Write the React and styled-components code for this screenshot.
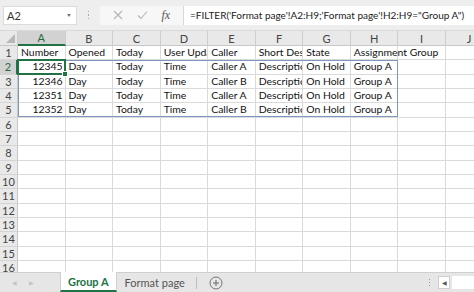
import React from "react";
import styled, { createGlobalStyle } from "styled-components";

const Global = createGlobalStyle`
  body {
    margin: 0;
    font-family: Lato, "Open Sans", sans-serif;
  }
`;

const COL_W = 47.55;
const ROW_H = 14.33;
const cols = ["A", "B", "C", "D", "E", "F", "G", "H", "I", "J"];

const data = [
  ["Number", "Opened", "Today", "User Update", "Caller", "Short Description", "State", "Assignment Group"],
  [12345, "Day", "Today", "Time", "Caller A", "Description", "On Hold", "Group A"],
  [12346, "Day", "Today", "Time", "Caller B", "Description", "On Hold", "Group A"],
  [12351, "Day", "Today", "Time", "Caller A", "Description", "On Hold", "Group A"],
  [12352, "Day", "Today", "Time", "Caller B", "Description", "On Hold", "Group A"],
];

const Sheet = styled.div`
  width: 474px;
  height: 292px;
  display: flex;
  flex-direction: column;
  background: #fff;
  overflow: hidden;
  position: relative;
`;

const FormulaBar = styled.div`
  height: 31px;
  flex: none;
  background: #eeeeee;
  display: flex;
  align-items: center;
  padding: 0 0 0 3px;
  box-sizing: border-box;
  border-bottom: 1px solid #d9d9d9;
`;

const NameBox = styled.div`
  width: 74px;
  height: 19px;
  background: #fff;
  border: 1px solid #dcdcdc;
  box-sizing: border-box;
  display: flex;
  align-items: center;
  justify-content: space-between;
  padding: 0 5px 0 3px;
  font-size: 11px;
  color: #333;
`;

const Caret = styled.span`
  width: 0;
  height: 0;
  border-left: 2.5px solid transparent;
  border-right: 2.5px solid transparent;
  border-top: 3px solid #777;
`;

const Grip = styled.div`
  width: 23px;
  display: flex;
  flex-direction: column;
  align-items: center;
  gap: 2px;
  span {
    width: 1.5px;
    height: 1.5px;
    background: #aaa;
  }
`;

const IconBox = styled.div`
  width: 83px;
  height: 19px;
  background: #f7f7f7;
  display: flex;
  align-items: center;
  justify-content: space-around;
  padding: 0 6px;
  box-sizing: border-box;
`;

const Fx = styled.span`
  font-family: "Liberation Serif", serif;
  font-style: italic;
  color: #555;
  font-size: 12px;
`;

const FormulaInput = styled.div`
  flex: 1;
  height: 19px;
  background: #fff;
  border-left: 1px solid #d9d9d9;
  display: flex;
  align-items: center;
  padding-left: 6px;
  font-size: 10px;
  color: #222;
  white-space: nowrap;
  overflow: hidden;
`;

const Grid = styled.div`
  flex: 1;
  display: flex;
  flex-direction: column;
  overflow: hidden;
  position: relative;
`;

const Row = styled.div`
  display: grid;
  grid-template-columns: 18px repeat(10, ${COL_W}px);
  height: ${(p) => p.$h}px;
  flex: none;
`;

const HeadCell = styled.div`
  background: ${(p) => (p.$sel ? "#d2d2d2" : "#e9e9e9")};
  color: ${(p) => (p.$sel ? "#1e6b3d" : "#444")};
  border-right: 1px solid #cdcdcd;
  border-bottom: ${(p) => (p.$sel ? "2px solid #217346" : "1px solid #c8c8c8")};
  box-sizing: border-box;
  font-size: 11px;
  display: flex;
  align-items: center;
  justify-content: center;
  position: relative;
`;

const Corner = styled(HeadCell)`
  &::after {
    content: "";
    position: absolute;
    right: 2px;
    bottom: 2px;
    border-left: 9px solid transparent;
    border-bottom: 9px solid #b8b8b8;
  }
`;

const RowHead = styled.div`
  background: ${(p) => (p.$sel ? "#d2d2d2" : "#e9e9e9")};
  color: ${(p) => (p.$sel ? "#1e6b3d" : "#444")};
  border-right: ${(p) => (p.$sel ? "2px solid #217346" : "1px solid #c8c8c8")};
  border-bottom: 1px solid #d4d4d4;
  box-sizing: border-box;
  font-size: 11px;
  display: flex;
  align-items: center;
  justify-content: center;
`;

const Cell = styled.div`
  border-right: 1px solid #dadada;
  border-bottom: 1px solid #dadada;
  box-sizing: border-box;
  font-size: 10.4px;
  color: #111;
  white-space: nowrap;
  overflow: ${(p) => (p.$spill ? "visible" : "hidden")};
  text-align: ${(p) => (p.$num ? "right" : "left")};
  padding: 0 2px 0 3px;
  line-height: ${ROW_H - 1}px;
  position: relative;
  z-index: ${(p) => (p.$spill ? 1 : 0)};
`;

const Selection = styled.div`
  position: absolute;
  left: 17px;
  top: ${15 + ROW_H - 1}px;
  width: ${COL_W + 1}px;
  height: ${ROW_H + 1}px;
  border: 2px solid #217346;
  box-sizing: border-box;
  z-index: 3;
  &::after {
    content: "";
    position: absolute;
    right: -4px;
    bottom: -4px;
    width: 4px;
    height: 4px;
    background: #217346;
    border: 1px solid #fff;
  }
`;

const Range = styled.div`
  position: absolute;
  left: 18px;
  top: ${15 + ROW_H - 0.5}px;
  width: ${COL_W * 8}px;
  height: ${ROW_H * 4}px;
  border: 1px solid #7f97bf;
  box-sizing: border-box;
  z-index: 2;
`;

const TabBar = styled.div`
  height: 20px;
  flex: none;
  background: #e6e6e6;
  border-top: 1px solid #cfcfcf;
  display: flex;
  align-items: stretch;
  box-sizing: border-box;
  font-size: 11px;
`;

const Nav = styled.div`
  width: 60px;
  display: flex;
  align-items: center;
  padding-left: 12px;
  box-sizing: border-box;
  gap: 12px;
  color: #c4c4c4;
  font-size: 6px;
`;

const Tab = styled.div`
  padding: 0 ${(p) => (p.$active ? 7 : 8)}px;
  display: flex;
  align-items: center;
  background: ${(p) => (p.$active ? "#fff" : "transparent")};
  color: ${(p) => (p.$active ? "#217346" : "#555")};
  font-weight: ${(p) => (p.$active ? 700 : 400)};
  border-bottom: ${(p) => (p.$active ? "2px solid #217346" : "none")};
  border-left: ${(p) => (p.$active ? "1px solid #cfcfcf" : "none")};
  border-right: ${(p) => (p.$active ? "1px solid #cfcfcf" : "none")};
  margin-top: -1px;
`;

const TabSep = styled.div`
  width: 1px;
  background: #bdbdbd;
  margin: 4px 0 3px 3px;
`;

const AddBtn = styled.div`
  margin-left: 12px;
  display: flex;
  align-items: center;
`;

const Right = styled.div`
  margin-left: auto;
  display: flex;
  align-items: center;
`;

const VDots = styled.div`
  display: flex;
  flex-direction: column;
  gap: 1.5px;
  margin-right: 8px;
  span {
    width: 1.5px;
    height: 1.5px;
    background: #999;
  }
`;

const ScrollBtn = styled.div`
  width: 12px;
  height: 13px;
  background: #fff;
  border: 1px solid #cfcfcf;
  box-sizing: border-box;
  display: flex;
  align-items: center;
  justify-content: center;
  font-size: 6px;
  color: #555;
`;

const ScrollTrack = styled.div`
  width: 22px;
  height: 13px;
  background: #fff;
  margin-left: 2px;
`;

export default function App() {
  const rows = [];
  for (let r = 1; r <= 17; r++) {
    const vals = data[r - 1] || [];
    rows.push(
      <Row key={r} $h={ROW_H}>
        <RowHead $sel={r === 2}>{r}</RowHead>
        {cols.map((c, i) => {
          const v = vals[i];
          return (
            <Cell key={c} $num={typeof v === "number"} $spill={r === 1 && i === 7}>
              {v}
            </Cell>
          );
        })}
      </Row>
    );
  }

  return (
    <Sheet>
      <Global />
      <FormulaBar>
        <NameBox>
          A2
          <Caret />
        </NameBox>
        <Grip>
          <span />
          <span />
          <span />
        </Grip>
        <IconBox>
          <svg width="10" height="10" viewBox="0 0 10 10">
            <path d="M1 1L9 9M9 1L1 9" stroke="#b5b5b5" strokeWidth="1.1" />
          </svg>
          <svg width="11" height="10" viewBox="0 0 11 10">
            <path d="M1 5.5L4 8.5L10 1.5" stroke="#b5b5b5" strokeWidth="1.1" fill="none" />
          </svg>
          <Fx>fx</Fx>
        </IconBox>
        <FormulaInput>=FILTER('Format page'!A2:H9;'Format page'!H2:H9="Group A")</FormulaInput>
      </FormulaBar>
      <Grid>
        <Row $h={15}>
          <Corner />
          {cols.map((c) => (
            <HeadCell key={c} $sel={c === "A"}>
              {c}
            </HeadCell>
          ))}
        </Row>
        {rows}
        <Range />
        <Selection />
      </Grid>
      <TabBar>
        <Nav>
          <span>◀</span>
          <span>▶</span>
        </Nav>
        <Tab $active>Group A</Tab>
        <Tab>Format page</Tab>
        <TabSep />
        <AddBtn>
          <svg width="14" height="14" viewBox="0 0 14 14">
            <circle cx="7" cy="7" r="6" fill="none" stroke="#777" strokeWidth="1" />
            <path d="M7 4v6M4 7h6" stroke="#666" strokeWidth="1" />
          </svg>
        </AddBtn>
        <Right>
          <VDots>
            <span />
            <span />
            <span />
          </VDots>
          <ScrollBtn>◀</ScrollBtn>
          <ScrollTrack />
        </Right>
      </TabBar>
    </Sheet>
  );
}
